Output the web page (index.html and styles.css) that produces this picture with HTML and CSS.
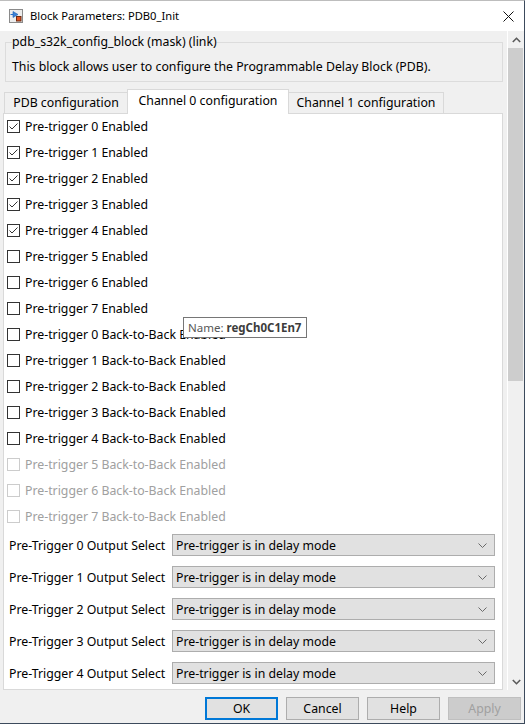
FILE: index.html
```html
<!DOCTYPE html>
<html>
<head>
<meta charset="utf-8">
<title>Block Parameters: PDB0_Init</title>
<link rel="stylesheet" href="styles.css">
</head>
<body>
<div class="window">
  <div class="titlebar">
    <svg class="appicon" width="14" height="14" viewBox="0 0 14 14">
      <rect x="0.5" y="0.5" width="13" height="13" fill="#ececec" stroke="#8a8a8a"/>
      <line x1="1.5" y1="5.5" x2="4" y2="5.5" stroke="#2a6fc9"/>
      <polygon points="4,2.5 9,5.5 4,8.5" fill="#3b82d6" stroke="#1f5fae" stroke-width="0.6"/>
      <rect x="7.5" y="7.5" width="4.5" height="4.5" fill="#e2531f" stroke="#6b2a12"/>
    </svg>
    <span class="title">Block Parameters: PDB0_Init</span>
    <svg class="close" width="11" height="11" viewBox="0 0 11 11">
      <path d="M0.5 0.5L10.5 10.5M10.5 0.5L0.5 10.5" stroke="#111" stroke-width="1"/>
    </svg>
  </div>

  <div class="client">
    <div class="scrollarea">
      <div class="content">
        <fieldset class="group">
          <legend>pdb_s32k_config_block (mask) (link)</legend>
          <p class="desc">This block allows user to configure the Programmable Delay Block (PDB).</p>
        </fieldset>

        <div class="tabs">
          <div class="tab tab-pdb">PDB configuration</div>
          <div class="tab tab-ch0 active">Channel 0 configuration</div>
          <div class="tab tab-ch1">Channel 1 configuration</div>
        </div>

        <div class="panel">
          <div class="check"><span class="cb on"><svg width="11" height="11" viewBox="0 0 11 11"><path d="M1.5 5.5L4 8L9.5 2.5" fill="none" stroke="#333" stroke-width="1"/></svg></span><span>Pre-trigger 0 Enabled</span></div>
          <div class="check"><span class="cb on"><svg width="11" height="11" viewBox="0 0 11 11"><path d="M1.5 5.5L4 8L9.5 2.5" fill="none" stroke="#333" stroke-width="1"/></svg></span><span>Pre-trigger 1 Enabled</span></div>
          <div class="check"><span class="cb on"><svg width="11" height="11" viewBox="0 0 11 11"><path d="M1.5 5.5L4 8L9.5 2.5" fill="none" stroke="#333" stroke-width="1"/></svg></span><span>Pre-trigger 2 Enabled</span></div>
          <div class="check"><span class="cb on"><svg width="11" height="11" viewBox="0 0 11 11"><path d="M1.5 5.5L4 8L9.5 2.5" fill="none" stroke="#333" stroke-width="1"/></svg></span><span>Pre-trigger 3 Enabled</span></div>
          <div class="check"><span class="cb on"><svg width="11" height="11" viewBox="0 0 11 11"><path d="M1.5 5.5L4 8L9.5 2.5" fill="none" stroke="#333" stroke-width="1"/></svg></span><span>Pre-trigger 4 Enabled</span></div>
          <div class="check"><span class="cb"></span><span>Pre-trigger 5 Enabled</span></div>
          <div class="check"><span class="cb"></span><span>Pre-trigger 6 Enabled</span></div>
          <div class="check"><span class="cb"></span><span>Pre-trigger 7 Enabled</span></div>
          <div class="check"><span class="cb"></span><span>Pre-trigger 0 Back-to-Back Enabled</span></div>
          <div class="check"><span class="cb"></span><span>Pre-trigger 1 Back-to-Back Enabled</span></div>
          <div class="check"><span class="cb"></span><span>Pre-trigger 2 Back-to-Back Enabled</span></div>
          <div class="check"><span class="cb"></span><span>Pre-trigger 3 Back-to-Back Enabled</span></div>
          <div class="check"><span class="cb"></span><span>Pre-trigger 4 Back-to-Back Enabled</span></div>
          <div class="check disabled"><span class="cb"></span><span>Pre-trigger 5 Back-to-Back Enabled</span></div>
          <div class="check disabled"><span class="cb"></span><span>Pre-trigger 6 Back-to-Back Enabled</span></div>
          <div class="check disabled"><span class="cb"></span><span>Pre-trigger 7 Back-to-Back Enabled</span></div>

          <div class="sel-row"><span class="sel-label">Pre-Trigger 0 Output Select</span><div class="combo"><span>Pre-trigger is in delay mode</span><svg class="chev" width="9" height="5" viewBox="0 0 9 5"><path d="M0.5 0.5L4.5 4.5L8.5 0.5" fill="none" stroke="#6a6a6a"/></svg></div></div>
          <div class="sel-row"><span class="sel-label">Pre-Trigger 1 Output Select</span><div class="combo"><span>Pre-trigger is in delay mode</span><svg class="chev" width="9" height="5" viewBox="0 0 9 5"><path d="M0.5 0.5L4.5 4.5L8.5 0.5" fill="none" stroke="#6a6a6a"/></svg></div></div>
          <div class="sel-row"><span class="sel-label">Pre-Trigger 2 Output Select</span><div class="combo"><span>Pre-trigger is in delay mode</span><svg class="chev" width="9" height="5" viewBox="0 0 9 5"><path d="M0.5 0.5L4.5 4.5L8.5 0.5" fill="none" stroke="#6a6a6a"/></svg></div></div>
          <div class="sel-row"><span class="sel-label">Pre-Trigger 3 Output Select</span><div class="combo"><span>Pre-trigger is in delay mode</span><svg class="chev" width="9" height="5" viewBox="0 0 9 5"><path d="M0.5 0.5L4.5 4.5L8.5 0.5" fill="none" stroke="#6a6a6a"/></svg></div></div>
          <div class="sel-row"><span class="sel-label">Pre-Trigger 4 Output Select</span><div class="combo"><span>Pre-trigger is in delay mode</span><svg class="chev" width="9" height="5" viewBox="0 0 9 5"><path d="M0.5 0.5L4.5 4.5L8.5 0.5" fill="none" stroke="#6a6a6a"/></svg></div></div>
        </div>
      </div>

      <div class="scrollbar">
        <div class="sb-btn"><svg width="9" height="6" viewBox="0 0 9 6"><path d="M0.8 5L4.5 1.3L8.2 5" fill="none" stroke="#5a5a5a" stroke-width="1.6"/></svg></div>
        <div class="sb-track"><div class="sb-thumb"></div></div>
        <div class="sb-btn"><svg width="9" height="6" viewBox="0 0 9 6"><path d="M0.8 1L4.5 4.7L8.2 1" fill="none" stroke="#5a5a5a" stroke-width="1.6"/></svg></div>
      </div>
    </div>

    <div class="buttons">
      <button class="btn default">OK</button>
      <button class="btn">Cancel</button>
      <button class="btn">Help</button>
      <button class="btn" disabled>Apply</button>
    </div>
  </div>

  <div class="tooltip">Name: <b>regCh0C1En7</b></div>
</div>
</body>
</html>
```

FILE: styles.css
```css
html, body {
  margin: 0;
  padding: 0;
}

body {
  width: 525px;
  height: 724px;
  overflow: hidden;
  font-family: "Noto Sans", "Open Sans", sans-serif;
  font-size: 12.3px;
  color: #000;
  background: #f0f0f0;
}

.window {
  position: relative;
  width: 525px;
  height: 724px;
  box-sizing: border-box;
  border-top: 1px solid #bdbdbd;
  border-right: 1px solid #3c4a5c;
  border-bottom: 1px solid #3c4a5c;
  background: #f0f0f0;
  display: flex;
  flex-direction: column;
}

/* title bar */
.titlebar {
  height: 30px;
  flex: none;
  background: #fff;
  display: flex;
  align-items: center;
  padding-left: 9px;
  padding-right: 10px;
}

.appicon {
  flex: none;
  display: block;
}

.title {
  margin-left: 7px;
  line-height: 16px;
  font-size: 11.2px;
}

.close {
  margin-left: auto;
  display: block;
}

/* client */
.client {
  flex: 1;
  display: flex;
  flex-direction: column;
  min-height: 0;
}

.scrollarea {
  height: 659px;
  flex: none;
  display: flex;
}

.content {
  flex: 1;
  min-width: 0;
  overflow: hidden;
  padding-top: 3px;
}

/* group box */
.group {
  margin: 0 0 0 5px;
  width: 498px;
  box-sizing: border-box;
  border: 1px solid #dcdcdc;
  padding: 0 6px 6px 6px;
}

.group legend {
  padding: 0;
  line-height: 16px;
}

.desc {
  margin: 9px 0 0 0;
  line-height: 16px;
}

/* tabs */
.tabs {
  display: flex;
  align-items: flex-end;
  margin: 7px 0 0 4px;
  height: 24px;
}

.tab {
  box-sizing: border-box;
  height: 21px;
  border: 1px solid #d9d9d9;
  border-bottom: none;
  background: #f0f0f0;
  text-align: center;
  line-height: 19px;
}

.tab-pdb {
  width: 123px;
  border-right: none;
}

.tab-ch0 {
  width: 162px;
}

.tab-ch1 {
  width: 155px;
  border-left: none;
}

.tab.active {
  position: relative;
  z-index: 1;
  height: 25px;
  margin-bottom: -1px;
  background: #fff;
  line-height: 22px;
}

/* panel */
.panel {
  margin-left: 3px;
  width: 500px;
  box-sizing: border-box;
  border: 1px solid #d9d9d9;
  background: #fff;
}

.check {
  height: 26px;
  display: flex;
  align-items: center;
  padding-left: 3px;
  gap: 5px;
}

.check:first-child {
  height: 25px;
}

.cb {
  width: 13px;
  height: 13px;
  box-sizing: border-box;
  border: 1px solid #333;
  background: #fff;
  flex: none;
  display: flex;
  align-items: center;
  justify-content: center;
}

.cb svg {
  display: block;
}

.check.disabled {
  color: #a0a0a0;
}

.check.disabled .cb {
  border-color: #cccccc;
}

.sel-row {
  height: 32px;
  display: grid;
  grid-template-columns: 163px 323px;
  align-items: center;
  padding-left: 5px;
}

.combo {
  height: 22px;
  box-sizing: border-box;
  border: 1px solid #adadad;
  background: #e1e1e1;
  display: flex;
  align-items: center;
  padding: 0 7px 0 3px;
}

.chev {
  margin-left: auto;
  display: block;
}

/* scrollbar */
.scrollbar {
  width: 17px;
  flex: none;
  display: flex;
  flex-direction: column;
  background: #f0f0f0;
  border-left: 1px solid #fff;
  box-sizing: border-box;
}

.sb-btn {
  height: 17px;
  flex: none;
  display: flex;
  align-items: center;
  justify-content: center;
}

.sb-track {
  flex: 1;
}

.sb-thumb {
  height: 333px;
  margin: 0 1px 0 0;
  background: #cdcdcd;
}

/* buttons */
.buttons {
  flex: 1;
  display: flex;
  justify-content: flex-end;
  align-items: flex-start;
  gap: 8px;
  padding: 7px 3px 0 0;
}

.btn {
  width: 73px;
  height: 23px;
  box-sizing: border-box;
  border: 1px solid #adadad;
  background: #e1e1e1;
  font-family: "Noto Sans", "Open Sans", sans-serif;
  font-size: 12.3px;
  color: #000;
  padding: 0;
}

.btn.default {
  border: 2px solid #0078d7;
}

.btn:disabled {
  background: #cccccc;
  border-color: #bfbfbf;
  color: #a0a0a0;
}

/* tooltip */
.tooltip {
  position: absolute;
  left: 183px;
  top: 316px;
  height: 21px;
  box-sizing: border-box;
  border: 1px solid #767676;
  background: #fff;
  color: #575757;
  padding: 0 5px 0 4px;
  line-height: 19px;
  font-size: 11.5px;
  white-space: nowrap;
}

.tooltip b {
  color: #3c3c3c;
}
```
